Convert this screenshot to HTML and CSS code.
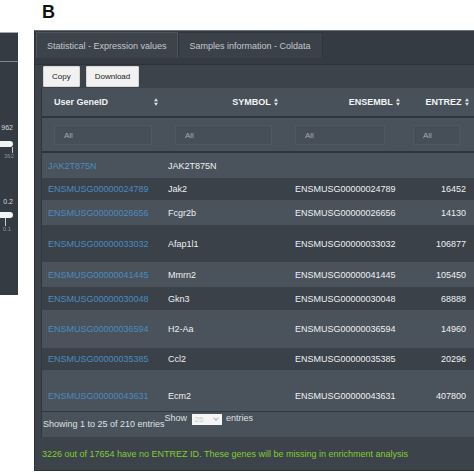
FILE: index.html
```html
<!DOCTYPE html>
<html>
<head>
<meta charset="utf-8">
<link rel="stylesheet" href="styles.css">
</head>
<body>
<div class="page">
  <aside class="side">
    <div class="side-head"></div>
    <div class="slider s1">
      <div class="val">962</div>
      <div class="track"></div>
      <div class="tick"></div>
      <div class="minval">362</div>
    </div>
    <div class="slider s2">
      <div class="val">0.2</div>
      <div class="track"></div>
      <div class="tick"></div>
      <div class="minval">0.1</div>
    </div>
  </aside>
  <main class="main">
    <div class="label">B</div>
    <section class="panel">
      <nav class="tabs">
        <div class="tab active">Statistical - Expression values</div>
        <div class="tab">Samples information - Coldata</div>
      </nav>
      <div class="content">
        <div class="buttons">
          <button class="btn">Copy</button>
          <button class="btn">Download</button>
        </div>
        <div class="tablewrap">
          <table class="dt">
            <colgroup>
              <col class="c1"><col class="c2"><col class="c3"><col class="c4">
            </colgroup>
            <thead>
              <tr class="head">
                <th class="h1"><span class="hwrap"><span>User GeneID</span><svg class="sort" viewBox="0 0 4 8"><path d="M0 3.3 L2 0.3 L4 3.3Z M0 4.7 L2 7.7 L4 4.7Z"/></svg></span></th>
                <th class="h2">SYMBOL <svg class="sort" viewBox="0 0 4 8"><path d="M0 3.3 L2 0.3 L4 3.3Z M0 4.7 L2 7.7 L4 4.7Z"/></svg></th>
                <th class="h3">ENSEMBL <svg class="sort" viewBox="0 0 4 8"><path d="M0 3.3 L2 0.3 L4 3.3Z M0 4.7 L2 7.7 L4 4.7Z"/></svg></th>
                <th class="h4">ENTREZ <svg class="sort" viewBox="0 0 4 8"><path d="M0 3.3 L2 0.3 L4 3.3Z M0 4.7 L2 7.7 L4 4.7Z"/></svg></th>
              </tr>
              <tr class="filters">
                <td><div class="filter f1">All</div></td>
                <td><div class="filter f2">All</div></td>
                <td><div class="filter f3">All</div></td>
                <td><div class="filter f4">All</div></td>
              </tr>
            </thead>
            <tbody>
              <tr class="odd r1"><td class="id">JAK2T875N</td><td>JAK2T875N</td><td></td><td class="num"></td></tr>
              <tr class="even r2"><td class="id">ENSMUSG00000024789</td><td>Jak2</td><td>ENSMUSG00000024789</td><td class="num">16452</td></tr>
              <tr class="odd r3"><td class="id">ENSMUSG00000026656</td><td>Fcgr2b</td><td>ENSMUSG00000026656</td><td class="num">14130</td></tr>
              <tr class="even r4"><td class="id">ENSMUSG00000033032</td><td>Afap1l1</td><td>ENSMUSG00000033032</td><td class="num">106877</td></tr>
              <tr class="odd r5"><td class="id">ENSMUSG00000041445</td><td>Mmrn2</td><td>ENSMUSG00000041445</td><td class="num">105450</td></tr>
              <tr class="even r6"><td class="id">ENSMUSG00000030048</td><td>Gkn3</td><td>ENSMUSG00000030048</td><td class="num">68888</td></tr>
              <tr class="odd r7"><td class="id">ENSMUSG00000036594</td><td>H2-Aa</td><td>ENSMUSG00000036594</td><td class="num">14960</td></tr>
              <tr class="even r8"><td class="id">ENSMUSG00000035385</td><td>Ccl2</td><td>ENSMUSG00000035385</td><td class="num">20296</td></tr>
              <tr class="odd r9"><td class="id">ENSMUSG00000043631</td><td>Ecm2</td><td>ENSMUSG00000043631</td><td class="num">407800</td></tr>
            </tbody>
          </table>
          <div class="footer">
            <div class="info">Showing 1 to 25 of 210 entries</div>
            <div class="length">Show <span class="select">25<span class="chev"></span></span> entries</div>
          </div>
        </div>
        <p class="note">3226 out of 17654 have no ENTREZ ID. These genes will be missing in enrichment analysis</p>
      </div>
    </section>
  </main>
</div>
</body>
</html>
```

FILE: styles.css
```css
* { box-sizing: border-box; }

html, body {
  margin: 0;
  padding: 0;
  width: 474px;
  height: 474px;
  overflow: hidden;
  background: #ffffff;
  font-family: "Liberation Sans", Arial, sans-serif;
}

.page {
  display: flex;
  gap: 16px;
  width: 474px;
  height: 474px;
}

/* ---------- left cropped panel ---------- */
.side {
  flex: 0 0 18px;
  margin-top: 32px;
  height: 263px;
  background: #343b43;
  border-top: 1px solid #a3a8ad;
  display: flex;
  flex-direction: column;
  overflow: hidden;
}

.side-head {
  height: 29px;
  border-bottom: 1px solid #80868c;
}

.slider { display: flex; flex-direction: column; }

.val {
  font-size: 7px;
  line-height: 8px;
  color: #d5d8db;
  text-align: right;
  padding-right: 5px;
  white-space: nowrap;
}

.track {
  width: 13px;
  height: 6px;
  background: #f2f3f4;
  border-radius: 0 3px 3px 0;
}

.tick {
  width: 1px;
  background: #c9ccd0;
}

.minval {
  font-size: 6px;
  line-height: 6px;
  color: #8b9197;
  text-align: right;
  padding-right: 4px;
  white-space: nowrap;
}

.s1 { margin-top: 62px; }
.s1 .track { margin-top: 9px; }
.s1 .tick { height: 6px; margin-left: 12px; }

.s2 { margin-top: 39px; }
.s2 .track { margin-top: 6px; }
.s2 .tick { height: 8px; margin-left: 5px; }
.s2 .minval { padding-right: 7px; }

/* ---------- main ---------- */
.main {
  flex: 1;
  display: flex;
  flex-direction: column;
  min-width: 0;
}

.label {
  font-size: 18px;
  font-weight: bold;
  line-height: 24px;
  height: 24px;
  margin-bottom: 6px;
  padding-left: 8px;
  color: #111;
}

.panel {
  background: #3b4249;
  border: 1px solid #2b3137;
  border-top-color: #6c7278;
  border-right: none;
  height: 441px;
  display: flex;
  flex-direction: column;
}

.tabs {
  display: flex;
  height: 34px;
  padding: 1px 0 0 1px;
  background: #353b43;
  border-bottom: 1px solid #2c3238;
}

.tab {
  height: 26px;
  line-height: 26px;
  padding: 0 10px;
  font-size: 9px;
  color: #c3c8cd;
  white-space: nowrap;
  border: 1px solid #30363d;
  border-bottom: none;
  background: #3a4149;
}

.tab.active {
  border-color: #4d545c;
  background: #3c434b;
}

.tab + .tab {
  padding: 0 11px;
}

.content {
  flex: 1;
  padding-left: 7px;
  background: #3c434b;
  display: flex;
  flex-direction: column;
}

.buttons {
  display: flex;
  gap: 6px;
  margin: 1px 0 1px 1px;
}

.btn {
  height: 21px;
  padding: 0 8px;
  margin: 0;
  font-family: "Liberation Sans", Arial, sans-serif;
  font-size: 8px;
  color: #222;
  background: #f1f1f1;
  border: 1px solid #d6d6d6;
  border-radius: 1px;
}

.tablewrap {
  background: #3a4149;
  border-left: 1px solid #30363c;
  margin-left: -1px;
}

.dt {
  width: 432px;
  table-layout: fixed;
  border-collapse: collapse;
  font-size: 9px;
  color: #eef0f2;
}

.c1 { width: 120px; }
.c2 { width: 127px; }
.c3 { width: 121px; }
.c4 { width: 64px; }

.dt th, .dt td { padding: 0; white-space: nowrap; overflow: hidden; }

.head { height: 29px; background: #48505a; border-bottom: 2px solid #2f353c; }

.dt th {
  font-weight: bold;
  color: #f2f4f5;
  vertical-align: middle;
}

.hwrap { display: flex; align-items: center; justify-content: space-between; }
.h1 { text-align: left; padding: 0 4px 0 12px !important; }
.h2 { text-align: right; padding-right: 11px !important; }
.h3 { text-align: right; padding-right: 10px !important; }
.h4 { text-align: right; padding-right: 5px !important; }

.sort {
  width: 4px;
  height: 8px;
  fill: #dde1e5;
  vertical-align: -1px;
  margin-left: 1px;
}

.filters { height: 35px; background: #49515a; border-bottom: 2px solid #2f353c; }

.filter {
  height: 20px;
  line-height: 20px;
  padding-left: 9px;
  font-size: 8px;
  color: #a4aab0;
  background: #464e57;
  border: 1px solid #50585f;
}
.f1 { margin-left: 12px; width: 98px; }
.f2 { margin-left: 13px; width: 97px; }
.f3 { margin-left: 6px; width: 90px; }
.f4 { margin-left: 3px; width: 47px; }

.odd { background: #4a525b; }
.even { background: #3a4149; }

.dt tbody td { padding-left: 6px; vertical-align: middle; }
.dt tbody td.num { text-align: right; padding: 0 8px 0 0; }
.dt tbody td.id { color: #4a8cc0; }

.r1 { height: 26px; }
.r2 { height: 22px; }
.r3 { height: 25px; }
.r4 { height: 37px; }
.r5 { height: 25px; }
.r6 { height: 23px; }
.r7 { height: 38px; }
.r8 { height: 22px; }
.r9 { height: 41px; }
.dt tbody .r9 td { padding-top: 10px; }

.footer {
  display: flex;
  height: 26px;
  background: #49515a;
  border-top: 1px solid #30363c;
  font-size: 9px;
  color: #dfe2e5;
  white-space: nowrap;
}

.info { padding: 7px 0 0 1px; line-height: 11px; }
.length { padding-top: 1px; line-height: 11px; }

.select {
  display: inline-block;
  width: 30px;
  height: 11px;
  line-height: 11px;
  margin: 0 2px;
  padding-left: 3px;
  vertical-align: -1px;
  background: #f5f5f5;
  color: #c7c9cb;
  font-size: 8px;
  position: relative;
}

.chev {
  position: absolute;
  right: 4px;
  top: 2px;
  width: 4px;
  height: 4px;
  border-right: 1px solid #b0b3b6;
  border-bottom: 1px solid #b0b3b6;
  transform: rotate(45deg);
}

.note {
  margin: 12px 0 0 0;
  line-height: 11px;
  font-size: 9px;
  color: #84cc2e;
  white-space: nowrap;
}
```
